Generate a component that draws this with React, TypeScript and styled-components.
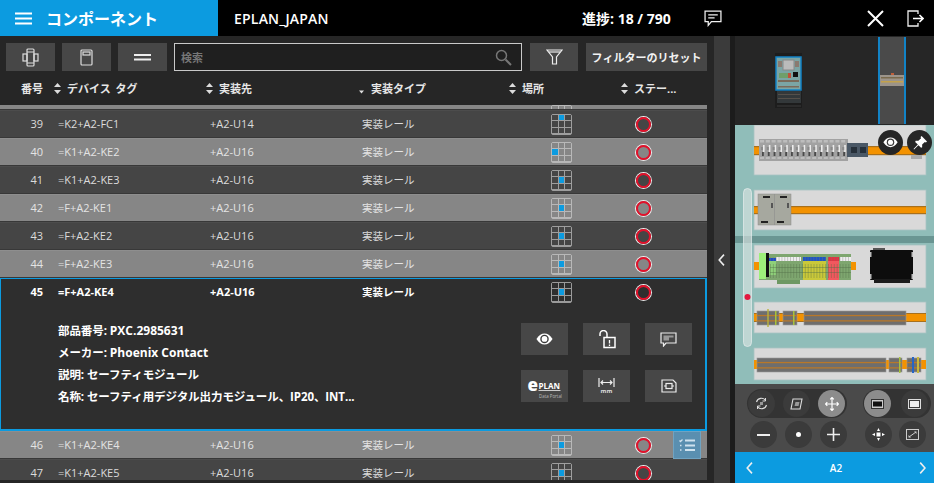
import React from "react";
import styled, { createGlobalStyle } from "styled-components";

const Global = createGlobalStyle`
  html, body { margin: 0; padding: 0; background: #000; }
  body { font-family: "Open Sans", "Noto Sans CJK JP", sans-serif; -webkit-font-smoothing: antialiased; }
  * { box-sizing: border-box; }
`;

const Page = styled.div`
  width: 934px; height: 483px; overflow: hidden; display: flex; flex-direction: column; background: #262626; color: #fff;
`;
const TopBar = styled.header`
  height: 36px; flex: none; display: flex; align-items: center; background: #000;
`;
const Brand = styled.div`
  width: 218px; height: 36px; background: #0c9be0; display: flex; align-items: center; padding-left: 15px; gap: 14px;
  font-size: 16px; font-weight: 700;
`;
const Project = styled.div`
  margin-left: 16px; font-size: 14px; font-weight: 600; width: 348px; letter-spacing: 0.2px;
`;
const Progress = styled.div`
  font-size: 14px; font-weight: 700; width: 122px; white-space: nowrap;
`;
const TopIcon = styled.div<{ $w: number }>`
  width: ${p => p.$w}px; display: flex; justify-content: flex-start; align-items: center;
`;
const Main = styled.div`
  flex: 1; display: flex; min-height: 0;
`;
const LeftPanel = styled.section`
  width: 714px; flex: none; display: flex; flex-direction: column; background: #262626;
`;
const Toolbar = styled.div`
  height: 35px; padding-top: 7px; display: flex; padding-left: 6px; flex: none;
`;
const ToolButton = styled.button<{ $w?: number; $ml?: number }>`
  width: ${p => p.$w ?? 49}px; height: 28px; margin-left: ${p => p.$ml ?? 0}px; background: #474747; border: 0; padding: 0;
  display: flex; align-items: center; justify-content: center; color: #f2f2f2;
  font: 700 11px "Open Sans", "Noto Sans CJK JP", sans-serif; white-space: nowrap;
`;
const Search = styled.div`
  width: 348px; height: 28px; margin-left: 7px; border: 1px solid #c9c9c9; background: #1f1f1f; display: flex;
  align-items: center; justify-content: space-between; padding: 0 9px 0 6px; color: #777; font-size: 11px; font-weight: 700;
`;
const HeaderRow = styled.div`
  height: 34px; flex: none; display: grid; grid-template-columns: 54px 152px 152px 151px 112px 86px; align-items: center;
  font-size: 11px; font-weight: 700; color: #e6e6e6;
`;
const HeadCell = styled.div`
  display: flex; align-items: center; gap: 6px; white-space: nowrap; word-spacing: 2px;
`;
const HeadNumber = styled(HeadCell)`
  padding-left: 21px;
`;
const List = styled.div`
  width: 707px; height: 375px; flex: none; overflow: hidden; display: flex; flex-direction: column;
`;
const Row = styled.div<{ $light?: boolean }>`
  position: relative; flex: none; height: 28px; display: grid; grid-template-columns: 58px 152px 152px 189px 21px 1fr;
  align-items: center; font-size: 11px; font-weight: 400;
  background: ${p => (p.$light ? "#868686" : "#454545")};
  color: ${p => (p.$light ? "#e4e4e4" : "#dcdcdc")};
  border-bottom: 1px solid #383838;
  border-top: 1px solid ${p => (p.$light ? "#8e8e8e" : "#4c4c4c")};
`;
const ClippedRow = styled(Row)`
  height: 5px; overflow: hidden; align-items: end; border-top: 0;
`;
const TextCell = styled.div`
  padding-bottom: 1px;
`;
const NumCell = styled(TextCell)`
  text-align: right; padding-right: 15px;
`;
const TypeCell = styled(TextCell)`
  font-size: 10.5px;
`;
const StatusCell = styled.div`
  display: flex; padding-left: 64px;
`;
const Ring = styled.div`
  width: 15px; height: 15px; border-radius: 50%; border: 2px solid #e3112b; box-shadow: 0 0 0 1px #ececec;
`;
const LocGrid = styled.div<{ $line: string }>`
  width: 21px; height: 21px; display: grid; grid-template-columns: repeat(3, 1fr); grid-template-rows: repeat(3, 1fr);
  border: 1px solid ${p => p.$line}; gap: 1px; background: ${p => p.$line}; border-radius: 2px;
`;
const LocCell = styled.div<{ $color: string }>`
  background: ${p => p.$color};
`;
const Expanded = styled.article`
  flex: none; height: 153px; background: #2e2e2e; border: 1px solid #0c9be0; border-width: 1px 2px 2px 1px; display: flex; flex-direction: column;
  font-size: 11px; font-weight: 700; color: #fff;
`;
const ExpandedHead = styled.div`
  height: 26px; flex: none; display: grid; grid-template-columns: 57px 152px 152px 189px 21px 1fr; align-items: center;
`;
const ExpandedBody = styled.div`
  display: flex; justify-content: space-between; padding: 18px 13px 0 57px;
`;
const Details = styled.div`
  display: flex; flex-direction: column; gap: 6px; font-size: 11.5px; letter-spacing: -0.08px;
  & > div { height: 16px; line-height: 16px; white-space: nowrap; }
`;
const Latin = styled.span`
  font-size: 12px; letter-spacing: 0;
`;
const ActionGrid = styled.div`
  display: grid; grid-template-columns: repeat(3, 47px); grid-auto-rows: 32px; column-gap: 15px; row-gap: 15px;
`;
const ActionButton = styled.button`
  background: #474747; border: 0; padding: 0; display: flex; align-items: center; justify-content: center; color: #fff;
`;
const ChecklistOverlay = styled.div`
  position: absolute; right: 6px; top: -1px; width: 28px; height: 28px; background: #5a8fb0; border: 1px solid #6fa3c2;
  display: flex; align-items: center; justify-content: center;
`;
const Collapse = styled.div`
  width: 16px; flex: none; background: #3b3b3b; display: flex; align-items: center; justify-content: center;
`;
const RightPanel = styled.aside`
  flex: 1; display: flex; flex-direction: column; background: #262626; border-left: 5px solid #1c1c1c; min-width: 0;
`;
const Thumbs = styled.div`
  height: 89px; flex: none; display: flex; align-items: flex-start; padding-left: 40px;
`;
const CanvasArea = styled.div`
  position: relative; height: 259px; flex: none; overflow: hidden; background: #90bdb9;
`;
const RoundOverlay = styled.div<{ $left: number }>`
  position: absolute; top: 5px; left: ${p => p.$left}px; width: 25px; height: 25px; border-radius: 50%; background: #262626;
  display: flex; align-items: center; justify-content: center;
`;
const Controls = styled.div`
  height: 68px; flex: none; background: #4a4a4a; display: flex; flex-direction: column; gap: 3px; padding: 5px 3px 0 12px;
`;
const ControlRow = styled.div`
  display: flex; align-items: center; justify-content: space-between;
`;
const Pill = styled.div`
  height: 29px; border-radius: 15px; background: #333; display: flex; align-items: center; justify-content: space-between; padding: 0 2px;
`;
const PillA = styled(Pill)`
  width: 100px; padding-left: 1px;
`;
const PillB = styled(Pill)`
  width: 68px; padding-left: 1px; padding-right: 3px;
`;
const CircleButton = styled.div<{ $active?: boolean }>`
  width: 27px; height: 27px; border-radius: 50%;
  background: ${p => (p.$active ? "#8c8c8c" : "#3b3b3b")}; display: flex; align-items: center; justify-content: center; flex: none;
`;
const ZoomGroup = styled.div`
  display: flex; gap: 8px; padding-left: 3px;
`;
const ViewGroup = styled.div`
  display: flex; gap: 7px; padding-right: 5px; align-items: flex-start;
`;
const NavBar = styled.div`
  flex: 1; background: #0c9be0; display: flex; align-items: center; justify-content: space-between; padding: 0 8px 0 11px;
  font-size: 10px; font-weight: 600; color: #fff;
`;

const W = "#f0f0f0";

const Menu = () => (
  <svg width="17" height="13" viewBox="0 0 17 13"><path d="M0 1.500h17M0 6.500h17M0 11.500h17" stroke="#fff" strokeWidth="2" /></svg>
);
const Chat = ({ c = W }: { c?: string }) => (
  <svg width="18" height="17" viewBox="0 0 17 16" fill="none" stroke={c} strokeWidth="1.200">
    <path d="M1 1h15v10H7l-3 3.500V11H1z" /><path d="M4 4.500h9M4 7.500h6" />
  </svg>
);
const CloseX = () => (
  <svg width="17" height="17" viewBox="0 0 17 17"><path d="M1 1l15 15M16 1L1 16" stroke="#fff" strokeWidth="2" /></svg>
);
const Exit = () => (
  <svg width="17" height="17" viewBox="0 0 17 17" fill="none" stroke="#eee" strokeWidth="1.300">
    <path d="M11 4V1H1v15h10v-3" /><path d="M6 8.500h10M12.500 5l3.500 3.500-3.500 3.500" stroke="#fff" strokeWidth="1.600" />
  </svg>
);
const ColumnsIcon = () => (
  <svg width="17" height="19" viewBox="0 0 17 19" fill="none" stroke="#ddd" strokeWidth="1.200">
    <rect x="5" y="1" width="7" height="17" rx="1" /><rect x="1" y="6" width="4" height="7" /><rect x="12" y="6" width="4" height="7" /><path d="M5 4h7M5 15h7" />
  </svg>
);
const PanelIcon = () => (
  <svg width="13" height="17" viewBox="0 0 13 17" fill="none" stroke="#ddd" strokeWidth="1.200">
    <rect x="1" y="1" width="11" height="15" rx="1" /><rect x="3" y="3" width="7" height="3" />
  </svg>
);
const BarsIcon = () => (
  <svg width="17" height="7" viewBox="0 0 17 7"><path d="M0 1h17M0 5.500h17" stroke="#eee" strokeWidth="2" /></svg>
);
const SearchIcon = () => (
  <svg width="17" height="17" viewBox="0 0 17 17" fill="none" stroke="#777" strokeWidth="1.500">
    <circle cx="6.500" cy="6.500" r="5" /><path d="M10.500 10.500l5.500 5.500" strokeWidth="2" />
  </svg>
);
const Funnel = () => (
  <svg width="17" height="16" viewBox="0 0 17 16" fill="none" stroke="#eee" strokeWidth="1.200">
    <path d="M1 1h15l-5.500 7v7h-4V8z" /><path d="M3 3h11" />
  </svg>
);
const Sort = () => (
  <svg width="7" height="11" viewBox="0 0 7 11" fill="#ddd"><path d="M3.500 0L7 4H0zM3.500 11L0 7h7z" /></svg>
);
const SortDown = () => (
  <svg width="7" height="11" viewBox="0 0 7 11" fill="#ddd"><path d="M1 7.500h5L3.500 10.500z" /></svg>
);
const Eye = ({ size = 17 }: { size?: number }) => (
  <svg width={size} height={size * 0.7} viewBox="0 0 20 14">
    <path d="M0.500 7c3-4.800 6-6.500 9.500-6.500S16.500 2.200 19.500 7c-3 4.800-6 6.500-9.500 6.500S3.500 11.800 0.500 7z" fill="#fff" />
    <circle cx="10" cy="7" r="5" fill="#3a3a3a" />
    <circle cx="10" cy="7" r="3.400" fill="#fff" />
  </svg>
);
const Lock = () => (
  <svg width="18" height="19" viewBox="0 0 18 19" fill="none" stroke="#fff" strokeWidth="1.500">
    <rect x="6" y="7.500" width="11" height="10" /><path d="M2 6V4a3.500 3.500 0 0 1 7 0v3.500" />
    <path d="M11.500 10v3.500M11.500 14.500v1.500" strokeWidth="1.300" />
  </svg>
);
const ChatFill = () => (
  <svg width="17" height="15" viewBox="0 0 17 15" fill="none" stroke="#eee" strokeWidth="1.200">
    <path d="M1 1h15v10H6l-2.500 3V11H1z" /><path d="M3.500 3.500h10v2H9v3H3.500z" fill="#999" stroke="none" />
  </svg>
);
const Measure = () => (
  <svg width="17" height="16" viewBox="0 0 17 16" fill="none" stroke="#eee" strokeWidth="1.200">
    <path d="M1 0v9M16 0v9M3 4.500h11M5 2.500l-2 2 2 2M12 2.500l2 2-2 2" />
    <text x="8.500" y="15" textAnchor="middle" fontFamily="Open Sans, sans-serif" fontWeight="700" fontSize="6" fill="#ddd" stroke="none">mm</text>
  </svg>
);
const Chip = () => (
  <svg width="16" height="14" viewBox="0 0 16 14" fill="none" stroke="#eee" strokeWidth="1.200">
    <path d="M1 1h11l3 3v9H1z" /><rect x="5" y="4.500" width="6" height="5" /><path d="M3 7h2M11 7h2" />
  </svg>
);
const Checklist = () => (
  <svg width="16" height="13" viewBox="0 0 16 13" fill="none" stroke="#cfe2ee" strokeWidth="1.300">
    <path d="M0.500 1.500l1 1 2-2M1 6.500h1.500M1 11h1.500" /><path d="M6 1.500h10M6 6.500h10M6 11h10" strokeWidth="1.800" />
  </svg>
);
const ChevronLeft = ({ h = 12 }: { h?: number }) => (
  <svg width={h * 0.6} height={h} viewBox="0 0 6 10" fill="none" stroke="#eee" strokeWidth="1.300"><path d="M5 0.500L1 5l4 4.500" /></svg>
);
const ChevronRight = ({ h = 12 }: { h?: number }) => (
  <svg width={h * 0.6} height={h} viewBox="0 0 6 10" fill="none" stroke="#eee" strokeWidth="1.300"><path d="M1 0.500L5 5l-4 4.500" /></svg>
);
const Pin = () => (
  <svg width="14" height="14" viewBox="0 0 13 13" fill="#fff"><path d="M8 0l5 5-1 1-1-.5L8.500 8 8.500 10.500 7.500 11 5 8.500 1 12.500 0.500 12 4.500 8 2 5.500 2.500 4.500 5 4.500 7.500 2 7 1z" /></svg>
);
const Rotate = () => (
  <svg width="13" height="13" viewBox="0 0 13 13" fill="none" stroke="#ddd" strokeWidth="1.100">
    <path d="M1.500 5a5 5 0 0 1 9-1.500M11.500 8a5 5 0 0 1-9 1.500" /><path d="M10.500 1v3h-3M2.500 12V9h3" strokeWidth="1" /><rect x="5" y="5" width="3" height="3" fill="#999" stroke="none" />
  </svg>
);
const Skew = () => (
  <svg width="13" height="12" viewBox="0 0 13 12" fill="none" stroke="#ddd" strokeWidth="1.100">
    <path d="M3 1h9l-2 10H1z" /><path d="M5.500 4h4l-1 4h-4z" fill="#999" stroke="none" />
  </svg>
);
const Move = () => (
  <svg width="14" height="14" viewBox="0 0 14 14" fill="none" stroke="#fff" strokeWidth="1.200">
    <path d="M7 0.500v13M0.500 7h13M5.200 2.300L7 0.500l1.800 1.800M5.200 11.700L7 13.500l1.800-1.800M2.300 5.200L0.500 7l1.800 1.800M11.700 5.200L13.500 7l-1.800 1.800" />
  </svg>
);
const ScreenDark = () => (
  <svg width="13" height="10" viewBox="0 0 13 10"><rect x="0.500" y="0.500" width="12" height="9" fill="#ccc" stroke="#333" /><rect x="2" y="2.500" width="9" height="5" fill="#111" /></svg>
);
const ScreenLight = () => (
  <svg width="13" height="10" viewBox="0 0 13 10"><rect x="0.500" y="0.500" width="12" height="9" fill="none" stroke="#ddd" /><rect x="2" y="2" width="9" height="6" fill="#eee" /></svg>
);
const Minus = () => <svg width="13" height="2" viewBox="0 0 13 2"><rect width="13" height="2" fill="#eee" /></svg>;
const Dot = () => <svg width="5" height="5" viewBox="0 0 5 5"><circle cx="2.500" cy="2.500" r="2.500" fill="#fff" /></svg>;
const Plus = () => <svg width="13" height="13" viewBox="0 0 13 13"><path d="M6.500 0v13M0 6.500h13" stroke="#eee" strokeWidth="1.600" /></svg>;
const Focus = () => (
  <svg width="13" height="13" viewBox="0 0 13 13" fill="#fff"><path d="M6.500 0L8 3H5zM6.500 13L5 10h3zM0 6.500L3 5v3zM13 6.500L10 8V5z" /><rect x="4.500" y="4.500" width="4" height="4" /></svg>
);
const Expand = () => (
  <svg width="13" height="11" viewBox="0 0 13 11" fill="none" stroke="#ccc"><rect x="0.500" y="0.500" width="12" height="10" /><path d="M3 8l7-5" /><path d="M2.500 6v2.500H5M8 2.500h2.500V5" fill="#ccc" stroke="none" /></svg>
);

const EplanLogo = () => (
  <svg width="36" height="30" viewBox="0 -5 36 30">
    <text x="0.500" y="14.500" fontFamily="Open Sans, sans-serif" fontWeight="800" fontSize="17" fill="#fff">e</text>
    <text x="11.500" y="12.500" fontFamily="Open Sans, sans-serif" fontWeight="700" fontSize="8" fill="#fff">PLAN</text>
    <rect x="11.500" y="14" width="22" height="1" fill="#ccc" />
    <text x="12" y="21.500" fontFamily="Open Sans, sans-serif" fontSize="4.400" fill="#bbb">Data Portal</text>
  </svg>
);

const Terminal = ({ x, y, w, h }: { x: number; y: number; w: number; h: number }) => (
  <g>
    <rect x={x} y={y} width={w} height={h} fill="#6e6e6e" stroke="#9a9a9a" strokeWidth="0.600" />
    <rect x={x} y={y + h * 0.28} width={w} height={1.300} fill="#b8782a" />
    <rect x={x} y={y + h * 0.66} width={w} height={1.300} fill="#b8782a" />
  </g>
);

const CabinetDrawing = () => {
  const ox = 735, oy = 125;
  const plates: [number, number][] = [[125, 175], [190, 230], [245, 288], [302, 333], [348, 380]];
  const greyCols = Array.from({ length: 15 }, (_, i) => 760 + i * 5.800);
  const greenCols = Array.from({ length: 28 }, (_, i) => 770 + i * 2.900);
  return (
    <svg width="199" height="259" viewBox={`${ox} ${oy} 199 259`} style={{ display: "block" }}>
      <rect x={ox} y={oy} width="199" height="259" fill="#90bdb9" />
      <rect x="735" y="236" width="199" height="7" fill="#6a9693" />
      {plates.map(([a, b]) => (
        <rect key={a} x="754" y={a} width="172" height={b - a} fill="#d9d9d9" stroke="#a9c4c2" strokeWidth="0.800" />
      ))}
      {/* plate 1 */}
      <rect x="754" y="146" width="172" height="9" fill="#f39200" />
      <rect x="754" y="146" width="172" height="1.200" fill="#a8701c" />
      <rect x="754" y="154" width="172" height="1.200" fill="#a8701c" />
      <rect x="759" y="139" width="89" height="22" fill="#a2a2a2" />
      {greyCols.map(x => (
        <g key={x}>
          <rect x={x} y="140" width="4" height="2.500" fill="#bdbdbd" />
          <rect x={x + 3} y="145" width="1.600" height="7" fill="#ececec" />
          <rect x={x + 1} y="147" width="2" height="3" fill="#8a8a8a" />
          <rect x={x + 2} y="152" width="1.800" height="4" fill="#4a4a4a" />
          <rect x={x} y="157" width="4" height="2" fill="#bdbdbd" />
        </g>
      ))}
      <rect x="847" y="143" width="21" height="14" fill="#4a5866" />
      <rect x="851" y="147" width="6" height="6" fill="#26303a" />
      <rect x="860" y="147" width="6" height="6" fill="#26303a" />
      <rect x="911" y="155" width="11" height="4" fill="#aaa" />
      {/* plate 2 */}
      <rect x="754" y="206" width="172" height="8" fill="#f39200" />
      <rect x="754" y="206" width="172" height="1.200" fill="#a8701c" />
      <rect x="754" y="213" width="172" height="1.200" fill="#a8701c" />
      <rect x="758" y="194" width="33" height="31" fill="#a6a89f" stroke="#8d8d8d" strokeWidth="0.500" />
      <path d="M774.500 194v31" stroke="#8d8d8d" strokeWidth="0.600" />
      <rect x="763" y="196" width="7" height="2" fill="#222" /><rect x="780" y="196" width="7" height="2" fill="#222" />
      <rect x="761" y="221" width="7" height="2" fill="#222" /><rect x="777" y="221" width="7" height="2" fill="#222" />
      <rect x="771" y="203" width="2" height="5" fill="#555" /><rect x="787" y="203" width="2" height="5" fill="#555" />
      {/* plate 3 */}
      <rect x="754" y="262" width="5" height="8" fill="#f39200" /><rect x="851" y="262" width="5" height="8" fill="#f39200" />
      <rect x="759" y="254" width="92" height="26" fill="#7ea66f" />
      <rect x="759" y="253" width="7" height="26" fill="#9df07a" />
      <rect x="766" y="253" width="3" height="24" fill="#111" />
      <rect x="769" y="258" width="7" height="3" fill="#1d49c4" />
      <rect x="776" y="257" width="25" height="4" fill="#eee" />
      <rect x="803" y="257" width="23" height="4" fill="#1d55c4" />
      <rect x="828" y="257" width="11" height="4" fill="#e53040" />
      <rect x="840" y="257" width="11" height="4" fill="#eee" />
      <rect x="803" y="261" width="23" height="19" fill="#c9c83a" />
      <rect x="828" y="261" width="11" height="19" fill="#f2585e" />
      <rect x="769" y="261" width="7" height="14" fill="#8fd07a" />
      <rect x="777" y="280" width="23" height="4" fill="#6e9863" />
      {greenCols.map(x => (
        <g key={x}>
          <rect x={x} y="257" width="0.700" height="4" fill="#777" opacity="0.500" />
          <rect x={x} y="264" width="1" height="14" fill="#4f6b46" opacity="0.350" />
        </g>
      ))}
      <rect x="770" y="267" width="81" height="0.800" fill="#4f6b46" opacity="0.500" />
      <rect x="770" y="272" width="81" height="0.800" fill="#4f6b46" opacity="0.500" />
      <rect x="870" y="250" width="43" height="30" rx="1" fill="#0d0d0d" />
      <rect x="874" y="279" width="36" height="4" fill="#1c1c1c" />
      <rect x="873" y="248" width="12" height="2" fill="#555" />
      <rect x="870" y="252" width="1.500" height="5" fill="#bbb" /><rect x="911.500" y="252" width="1.500" height="5" fill="#bbb" />
      <rect x="870" y="274" width="1.500" height="5" fill="#bbb" /><rect x="911.500" y="274" width="1.500" height="5" fill="#bbb" />
      {/* plate 4 */}
      <rect x="754" y="313" width="172" height="9" fill="#f39200" />
      <rect x="754" y="313" width="172" height="1" fill="#a8701c" /><rect x="754" y="321" width="172" height="1" fill="#a8701c" />
      <Terminal x={757} y={311} w={22} h={14} />
      <Terminal x={783} y={311} w={14} h={14} />
      <Terminal x={804} y={311} w={102} h={14} />
      <rect x="767" y="309" width="2" height="18" fill="#b9b23a" opacity="0.700" />
      <rect x="775" y="311" width="1.500" height="14" fill="#a8c23a" />
      <rect x="793" y="311" width="1.500" height="14" fill="#a8c23a" />
      {/* plate 5 */}
      <rect x="754" y="360" width="172" height="9" fill="#f39200" />
      <Terminal x={757} y={358} w={129} h={14} />
      <Terminal x={889} y={358} w={13} h={14} />
      <Terminal x={907} y={358} w={14} h={14} />
      <rect x="899" y="357" width="1.500" height="16" fill="#a8c23a" />
      <rect x="912" y="357" width="2" height="16" fill="#2565c8" /><rect x="917" y="357" width="2" height="16" fill="#c9b83a" />
      {/* slider */}
      <rect x="743.500" y="188.500" width="8" height="158" rx="4" fill="#dfe6e5" fillOpacity="0.600" stroke="#e8eeee" strokeOpacity="0.700" />
      <circle cx="747.500" cy="297" r="3" fill="#e3173e" />
    </svg>
  );
};

const ThumbDrawing = () => (
  <svg width="135" height="88" viewBox="0 0 135 88" style={{ display: "block" }}>
    <rect x="0" y="17" width="27" height="55" fill="#1d1d1d" />
    <rect x="1" y="21" width="25" height="33" fill="#7ba5a5" stroke="#1283c6" strokeWidth="1.500" />
    <rect x="8" y="24" width="11" height="10" fill="#bbb" stroke="#888" />
    <rect x="3" y="25" width="4" height="6" fill="#8a7a70" /><rect x="20" y="25" width="4" height="6" fill="#8a7a70" />
    <rect x="4" y="37" width="10" height="5" fill="#6f9f6a" /><rect x="13" y="37" width="3" height="5" fill="#c0503a" />
    <rect x="18" y="36" width="5" height="5" fill="#111" />
    <rect x="3" y="44" width="21" height="2" fill="#7a6a5a" /><rect x="3" y="50" width="21" height="1.500" fill="#7a6a5a" />
    <rect x="2" y="55" width="24" height="12" fill="#33383a" />
    <rect x="3" y="58" width="22" height="1" fill="#55504a" /><rect x="3" y="62" width="22" height="1" fill="#55504a" />
    <rect x="2" y="69" width="24" height="2" fill="#2c2c2c" />
    <rect x="104" y="1" width="26" height="87" fill="#4a4a4a" />
    <rect x="103" y="1" width="2" height="87" fill="#1283c6" /><rect x="129" y="1" width="2" height="87" fill="#1283c6" />
    <rect x="105" y="39" width="24" height="11" fill="#9c948a" />
    <rect x="106" y="41" width="22" height="1.500" fill="#7a6a4c" /><rect x="106" y="45" width="22" height="1.500" fill="#c4a24a" />
    <rect x="116" y="37" width="3" height="2" fill="#c0603a" />
  </svg>
);

type RowData = { n: number; tag: string; dest: string; loc: number; light: boolean };
const rowsA: RowData[] = [
  { n: 39, tag: "=K2+A2-FC1", dest: "+A2-U14", loc: 1, light: false },
  { n: 40, tag: "=K1+A2-KE2", dest: "+A2-U16", loc: 3, light: true },
  { n: 41, tag: "=K1+A2-KE3", dest: "+A2-U16", loc: 4, light: false },
  { n: 42, tag: "=F+A2-KE1", dest: "+A2-U16", loc: 4, light: true },
  { n: 43, tag: "=F+A2-KE2", dest: "+A2-U16", loc: 4, light: false },
  { n: 44, tag: "=F+A2-KE3", dest: "+A2-U16", loc: 4, light: true },
];
const rowsB: RowData[] = [
  { n: 46, tag: "=K1+A2-KE4", dest: "+A2-U16", loc: 4, light: true },
  { n: 47, tag: "=K1+A2-KE5", dest: "+A2-U16", loc: 4, light: false },
];

const Loc = ({ on, bg, line }: { on: number; bg: string; line: string }) => (
  <LocGrid $line={line}>
    {Array.from({ length: 9 }, (_, i) => <LocCell key={i} $color={i === on ? "#0c9be0" : bg} />)}
  </LocGrid>
);

const DataRow = ({ r, children }: { r: RowData; children?: React.ReactNode }) => (
  <Row $light={r.light}>
    <NumCell>{r.n}</NumCell>
    <TextCell>{r.tag}</TextCell>
    <TextCell>{r.dest}</TextCell>
    <TypeCell>実装レール</TypeCell>
    <Loc on={r.loc} bg={r.light ? "#868686" : "#454545"} line={r.light ? "#b8b8b8" : "#9e9e9e"} />
    <StatusCell><Ring /></StatusCell>
    {children}
  </Row>
);

export default function App() {
  return (
    <Page>
      <Global />
      <TopBar>
        <Brand><Menu /><span>コンポーネント</span></Brand>
        <Project>EPLAN_JAPAN</Project>
        <Progress>進捗: 18 / 790</Progress>
        <TopIcon $w={163}><Chat /></TopIcon>
        <TopIcon $w={40}><CloseX /></TopIcon>
        <TopIcon $w={17}><Exit /></TopIcon>
      </TopBar>
      <Main>
        <LeftPanel>
          <Toolbar>
            <ToolButton><ColumnsIcon /></ToolButton>
            <ToolButton $ml={7}><PanelIcon /></ToolButton>
            <ToolButton $ml={7}><BarsIcon /></ToolButton>
            <Search><span>検索</span><SearchIcon /></Search>
            <ToolButton $ml={8} $w={48}><Funnel /></ToolButton>
            <ToolButton $ml={8} $w={121}>フィルターのリセット</ToolButton>
          </Toolbar>
          <HeaderRow>
            <HeadNumber>番号</HeadNumber>
            <HeadCell><Sort />デバイス タグ</HeadCell>
            <HeadCell><Sort />実装先</HeadCell>
            <HeadCell><SortDown />実装タイプ</HeadCell>
            <HeadCell><Sort />場所</HeadCell>
            <HeadCell><Sort />ステー...</HeadCell>
          </HeaderRow>
          <List>
            <ClippedRow $light>
              <div /><div /><div /><div /><Loc on={-1} bg="#868686" line="#b8b8b8" />
            </ClippedRow>
            {rowsA.map(r => <DataRow key={r.n} r={r} />)}
            <Expanded>
              <ExpandedHead>
                <NumCell>45</NumCell>
                <TextCell>=F+A2-KE4</TextCell>
                <TextCell>+A2-U16</TextCell>
                <TypeCell>実装レール</TypeCell>
                <Loc on={4} bg="#2e2e2e" line="#9a9a9a" />
                <StatusCell><Ring /></StatusCell>
              </ExpandedHead>
              <ExpandedBody>
                <Details>
                  <div>部品番号: <Latin>PXC.2985631</Latin></div>
                  <div>メーカー: <Latin>Phoenix Contact</Latin></div>
                  <div>説明: セーフティモジュール</div>
                  <div>名称: セーフティ用デジタル出力モジュール、IP20、INT...</div>
                </Details>
                <ActionGrid>
                  <ActionButton><Eye /></ActionButton>
                  <ActionButton><Lock /></ActionButton>
                  <ActionButton><ChatFill /></ActionButton>
                  <ActionButton><EplanLogo /></ActionButton>
                  <ActionButton><Measure /></ActionButton>
                  <ActionButton><Chip /></ActionButton>
                </ActionGrid>
              </ExpandedBody>
            </Expanded>
            {rowsB.map((r, i) => (
              <DataRow key={r.n} r={r}>
                {i === 0 && <ChecklistOverlay><Checklist /></ChecklistOverlay>}
              </DataRow>
            ))}
          </List>
        </LeftPanel>
        <Collapse><ChevronLeft h={12} /></Collapse>
        <RightPanel>
          <Thumbs><ThumbDrawing /></Thumbs>
          <CanvasArea>
            <CabinetDrawing />
            <RoundOverlay $left={143}><Eye size={15} /></RoundOverlay>
            <RoundOverlay $left={172}><Pin /></RoundOverlay>
          </CanvasArea>
          <Controls>
            <ControlRow>
              <PillA>
                <CircleButton><Rotate /></CircleButton>
                <CircleButton><Skew /></CircleButton>
                <CircleButton $active><Move /></CircleButton>
              </PillA>
              <PillB>
                <CircleButton $active><ScreenDark /></CircleButton>
                <CircleButton><ScreenLight /></CircleButton>
              </PillB>
            </ControlRow>
            <ControlRow>
              <ZoomGroup>
                <CircleButton><Minus /></CircleButton>
                <CircleButton><Dot /></CircleButton>
                <CircleButton><Plus /></CircleButton>
              </ZoomGroup>
              <ViewGroup>
                <CircleButton><Focus /></CircleButton>
                <CircleButton><Expand /></CircleButton>
              </ViewGroup>
            </ControlRow>
          </Controls>
          <NavBar><ChevronLeft h={12} /><span>A2</span><ChevronRight h={12} /></NavBar>
        </RightPanel>
      </Main>
    </Page>
  );
}
